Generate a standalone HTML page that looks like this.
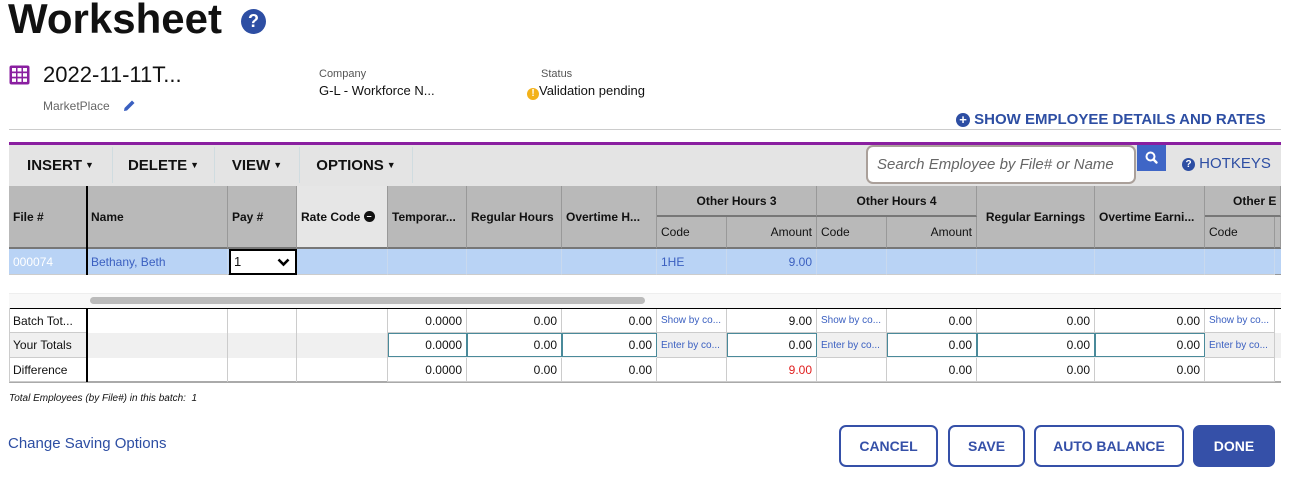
<!DOCTYPE html>
<html><head><meta charset="utf-8"><style>
*{margin:0;padding:0;box-sizing:border-box}
body{width:1295px;height:482px;background:#fff;font-family:"Liberation Sans",sans-serif;position:relative;overflow:hidden;color:#111}
.a{position:absolute}
.c{position:absolute;box-sizing:border-box;font-size:12px;display:flex;align-items:center;padding:0 4px;white-space:nowrap;overflow:hidden;border-right:1px solid #ccc;border-bottom:1px solid #ccc}
.h{background:#b9b9b9;font-weight:bold;border-right:1px solid #999;border-bottom:2px solid #777;font-size:12px}
.r{justify-content:flex-end}
.ctr{justify-content:center}
.d{background:#b9d3f5;color:#3a5fc0;border-right:1px solid #c9d9ee}
.lk{color:#3a5fc0;font-size:10px}
.inp{border:1px solid #4a8a9a;background:#fff}
.btn{position:absolute;top:425px;height:42px;border:2px solid #3550a8;border-radius:7px;color:#3550a8;font-weight:bold;font-size:14px;display:flex;align-items:center;justify-content:center;background:#fff}
.tb{position:absolute;top:147px;height:36px;border-right:1px solid #d0dce0;font-weight:bold;font-size:15px;display:flex;align-items:center;justify-content:center}
.tb i{font-style:normal;font-size:9px;margin-left:3px}
</style></head><body>
<div class="a" style="left:8px;top:-5px;font-size:42px;font-weight:bold;letter-spacing:0px">Worksheet</div>
<div class="a" style="left:241px;top:9px;width:25px;height:25px;border-radius:50%;background:#2d4ea3;color:#fff;font-weight:bold;font-size:18px;text-align:center;line-height:25px">?</div>
<svg class="a" style="left:9px;top:65px" width="21" height="20" viewBox="0 0 21 20"><rect x="0.5" y="0.5" width="20" height="19" rx="2" fill="#8a1fa0"/><g fill="#fff"><rect x="3" y="3" width="4" height="3.5"/><rect x="8.5" y="3" width="4" height="3.5"/><rect x="14" y="3" width="4" height="3.5"/><rect x="3" y="8.2" width="4" height="3.5"/><rect x="8.5" y="8.2" width="4" height="3.5"/><rect x="14" y="8.2" width="4" height="3.5"/><rect x="3" y="13.4" width="4" height="3.5"/><rect x="8.5" y="13.4" width="4" height="3.5"/><rect x="14" y="13.4" width="4" height="3.5"/></g></svg>
<div class="a" style="left:43px;top:62px;font-size:22px">2022-11-11T...</div>
<div class="a" style="left:43px;top:99px;font-size:12px;color:#666">MarketPlace</div>
<svg class="a" style="left:123px;top:99px" width="13" height="13" viewBox="0 0 13 13"><path d="M1 12 L1.5 9 L9 1.5 L11.5 4 L4 11.5 Z" fill="#3a5fc0"/></svg>
<div class="a" style="left:319px;top:68px;font-size:11px;color:#555">Company</div>
<div class="a" style="left:319px;top:83px;font-size:13px">G-L - Workforce N...</div>
<div class="a" style="left:541px;top:68px;font-size:11px;color:#555">Status</div>
<div class="a" style="left:527px;top:83px;font-size:13px"><span style="display:inline-block;width:12px;height:12px;border-radius:50%;background:#f3b21a;color:#fff;font-size:10px;text-align:center;line-height:12px;font-weight:bold;vertical-align:-1px">!</span>Validation pending</div>
<div class="a" style="left:956px;top:111px;font-size:15px;font-weight:bold;color:#2d4ea3"><span style="display:inline-block;width:14px;height:14px;border-radius:50%;background:#2d4ea3;color:#fff;font-size:13px;line-height:13px;text-align:center;vertical-align:0px">+</span> SHOW EMPLOYEE DETAILS AND RATES</div>
<div class="a" style="left:9px;top:129px;width:1272px;height:1px;background:#ccc"></div>
<div class="a" style="left:9px;top:142px;width:1272px;height:3px;background:#8a1fa0"></div>
<div class="a" style="left:9px;top:145px;width:1272px;height:41px;background:#e4e4e4"></div>
<div class="tb" style="left:9px;width:104px">INSERT<i>▼</i></div>
<div class="tb" style="left:113px;width:102px">DELETE<i>▼</i></div>
<div class="tb" style="left:215px;width:85px">VIEW<i>▼</i></div>
<div class="tb" style="left:300px;width:113px">OPTIONS<i>▼</i></div>
<div class="a" style="left:866px;top:145px;width:270px;height:39px;border:2px solid #aaa09a;border-radius:7px;background:#fff;font-style:italic;color:#666;font-size:15px;display:flex;align-items:center;padding-left:9px">Search Employee by File# or Name</div>
<div class="a" style="left:1137px;top:145px;width:29px;height:26px;background:#3f66c6"><svg width="29" height="26" viewBox="0 0 29 26"><circle cx="13.5" cy="11.5" r="4" fill="none" stroke="#fff" stroke-width="2"/><path d="M16.5 14.5 L19.5 17.5" stroke="#fff" stroke-width="2.4" stroke-linecap="round"/></svg></div>
<div class="a" style="left:1182px;top:155px;font-size:15px;color:#2d4ea3"><b style="display:inline-block;width:13px;height:13px;border-radius:50%;background:#2d4ea3;color:#fff;font-size:10px;text-align:center;line-height:13px;vertical-align:1px">?</b> HOTKEYS</div>

<!-- header -->
<div class="c h" style="left:9px;top:186px;width:78px;height:63px">File #</div>
<div class="c h" style="left:87px;top:186px;width:141px;height:63px">Name</div>
<div class="c h" style="left:228px;top:186px;width:69px;height:63px">Pay #</div>
<div class="c h" style="left:297px;top:186px;width:91px;height:63px;background:#e6e6e6">Rate Code&nbsp;<span style="display:inline-block;width:11px;height:11px;border-radius:50%;background:#111;color:#fff;font-size:9px;line-height:10px;text-align:center">–</span></div>
<div class="c h" style="left:388px;top:186px;width:79px;height:63px">Temporar...</div>
<div class="c h" style="left:467px;top:186px;width:95px;height:63px">Regular Hours</div>
<div class="c h" style="left:562px;top:186px;width:95px;height:63px">Overtime H...</div>
<div class="c h ctr" style="left:657px;top:186px;width:160px;height:31px">Other Hours 3</div>
<div class="c h ctr" style="left:817px;top:186px;width:160px;height:31px">Other Hours 4</div>
<div class="c h" style="left:977px;top:186px;width:118px;height:63px;justify-content:center">Regular Earnings</div>
<div class="c h" style="left:1095px;top:186px;width:110px;height:63px">Overtime Earni...</div>
<div class="c h" style="left:1205px;top:186px;width:76px;height:31px;padding-left:28px">Other E</div>
<div class="c h" style="left:657px;top:217px;width:70px;height:32px;font-weight:normal">Code</div>
<div class="c h r" style="left:727px;top:217px;width:90px;height:32px;font-weight:normal">Amount</div>
<div class="c h" style="left:817px;top:217px;width:70px;height:32px;font-weight:normal">Code</div>
<div class="c h r" style="left:887px;top:217px;width:90px;height:32px;font-weight:normal">Amount</div>
<div class="c h" style="left:1205px;top:217px;width:70px;height:32px;font-weight:normal">Code</div>
<div class="c h" style="left:1275px;top:217px;width:6px;height:32px;padding:0"></div>

<!-- data row -->
<div class="a" style="left:9px;top:249px;width:1272px;height:26px;background:#b9d3f5;border-bottom:1px solid #999"></div>
<div class="c d" style="left:9px;top:249px;width:78px;height:26px;color:#fff">000074</div>
<div class="c d" style="left:87px;top:249px;width:141px;height:26px">Bethany, Beth</div>
<div class="a" style="left:229px;top:249px;width:68px;height:26px;border:2px solid #000;background:#fff;font-size:13px;padding-left:3px;line-height:22px">1<svg style="position:absolute;right:5px;top:7px" width="13" height="9" viewBox="0 0 13 9"><path d="M1.5 1.5 L6.5 6.5 L11.5 1.5" fill="none" stroke="#000" stroke-width="2.6"/></svg></div>
<div class="c d" style="left:297px;top:249px;width:91px;height:26px"></div>
<div class="c d" style="left:388px;top:249px;width:79px;height:26px"></div>
<div class="c d" style="left:467px;top:249px;width:95px;height:26px"></div>
<div class="c d" style="left:562px;top:249px;width:95px;height:26px"></div>
<div class="c d" style="left:657px;top:249px;width:70px;height:26px">1HE</div>
<div class="c d r" style="left:727px;top:249px;width:90px;height:26px">9.00</div>
<div class="c d" style="left:817px;top:249px;width:70px;height:26px"></div>
<div class="c d" style="left:887px;top:249px;width:90px;height:26px"></div>
<div class="c d" style="left:977px;top:249px;width:118px;height:26px"></div>
<div class="c d" style="left:1095px;top:249px;width:110px;height:26px"></div>
<div class="c d" style="left:1205px;top:249px;width:70px;height:26px"></div>
<div class="a" style="left:86px;top:186px;width:2px;height:89px;background:#000"></div>

<!-- scrollbar -->
<div class="a" style="left:9px;top:293px;width:1272px;height:15px;background:#f8f8f8;border-top:1px solid #eee"></div>
<div class="a" style="left:90px;top:297px;width:555px;height:7px;border-radius:4px;background:#bbb"></div>
<div class="a" style="left:9px;top:308px;width:1272px;height:1px;background:#000"></div>

<!-- totals -->
<div class="a" style="left:9px;top:333px;width:1272px;height:25px;background:#f0f0f0"></div>
<div class="a" style="left:9px;top:308px;width:1272px;height:75px;border-bottom:2px solid #aaa;border-left:1px solid #ccc"></div>
<div class="c" style="left:9px;top:309px;width:78px;height:24px">Batch Tot...</div>
<div class="c" style="left:9px;top:333px;width:78px;height:25px">Your Totals</div>
<div class="c" style="left:9px;top:358px;width:78px;height:24px">Difference</div>
<div class="a" style="left:86px;top:309px;width:2px;height:73px;background:#000"></div>
<div class="c" style="left:88px;top:309px;width:140px;height:73px;border-bottom:none"></div>
<div class="c" style="left:228px;top:309px;width:69px;height:73px;border-bottom:none"></div>
<div class="c" style="left:297px;top:309px;width:91px;height:73px;border-bottom:none"></div>

<div class="c r" style="left:388px;top:309px;width:79px;height:24px">0.0000</div>
<div class="c r" style="left:467px;top:309px;width:95px;height:24px">0.00</div>
<div class="c r" style="left:562px;top:309px;width:95px;height:24px">0.00</div>
<div class="c lk" style="left:657px;top:309px;width:70px;height:24px">Show by co...</div>
<div class="c r" style="left:727px;top:309px;width:90px;height:24px">9.00</div>
<div class="c lk" style="left:817px;top:309px;width:70px;height:24px">Show by co...</div>
<div class="c r" style="left:887px;top:309px;width:90px;height:24px">0.00</div>
<div class="c r" style="left:977px;top:309px;width:118px;height:24px">0.00</div>
<div class="c r" style="left:1095px;top:309px;width:110px;height:24px">0.00</div>
<div class="c lk" style="left:1205px;top:309px;width:70px;height:24px">Show by co...</div>

<div class="c r inp" style="left:388px;top:333px;width:79px;height:24px">0.0000</div>
<div class="c r inp" style="left:467px;top:333px;width:95px;height:24px">0.00</div>
<div class="c r inp" style="left:562px;top:333px;width:95px;height:24px">0.00</div>
<div class="c lk" style="left:657px;top:333px;width:70px;height:25px">Enter by co...</div>
<div class="c r inp" style="left:727px;top:333px;width:90px;height:24px">0.00</div>
<div class="c lk" style="left:817px;top:333px;width:70px;height:25px">Enter by co...</div>
<div class="c r inp" style="left:887px;top:333px;width:90px;height:24px">0.00</div>
<div class="c r inp" style="left:977px;top:333px;width:118px;height:24px">0.00</div>
<div class="c r inp" style="left:1095px;top:333px;width:110px;height:24px">0.00</div>
<div class="c lk" style="left:1205px;top:333px;width:70px;height:25px">Enter by co...</div>

<div class="c r" style="left:388px;top:358px;width:79px;height:24px">0.0000</div>
<div class="c r" style="left:467px;top:358px;width:95px;height:24px">0.00</div>
<div class="c r" style="left:562px;top:358px;width:95px;height:24px">0.00</div>
<div class="c" style="left:657px;top:358px;width:70px;height:24px"></div>
<div class="c r" style="left:727px;top:358px;width:90px;height:24px;color:#e02020">9.00</div>
<div class="c" style="left:817px;top:358px;width:70px;height:24px"></div>
<div class="c r" style="left:887px;top:358px;width:90px;height:24px">0.00</div>
<div class="c r" style="left:977px;top:358px;width:118px;height:24px">0.00</div>
<div class="c r" style="left:1095px;top:358px;width:110px;height:24px">0.00</div>
<div class="c" style="left:1205px;top:358px;width:70px;height:24px"></div>

<div class="a" style="left:9px;top:393px;font-size:10px;font-style:italic">Total Employees (by File#) in this batch:&nbsp; 1</div>
<div class="a" style="left:8px;top:435px;font-size:15px;color:#2d4ea3">Change Saving Options</div>
<div class="btn" style="left:839px;width:99px">CANCEL</div>
<div class="btn" style="left:948px;width:77px">SAVE</div>
<div class="btn" style="left:1034px;width:150px">AUTO BALANCE</div>
<div class="btn" style="left:1193px;width:82px;background:#3550a8;color:#fff">DONE</div>
</body></html>
